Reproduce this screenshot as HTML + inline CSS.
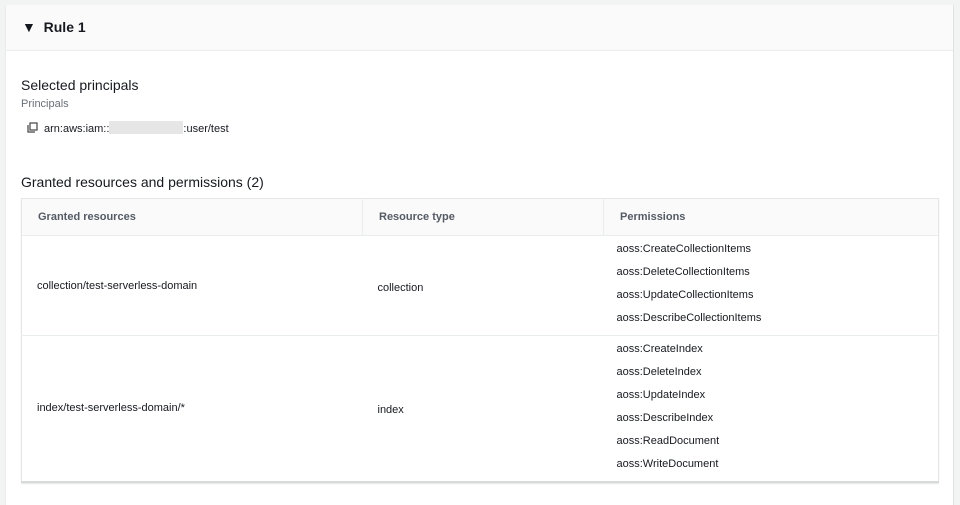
<!DOCTYPE html>
<html><head><style>
body{margin:0;width:960px;height:498px;background:#f2f3f3;font-family:"Liberation Sans",sans-serif;color:#16191f;overflow:hidden;position:relative}
.card{position:absolute;left:5px;top:5px;width:947px;height:500px;background:#fff;border-left:1px solid #e9ebed;border-right:1px solid #dfe1e3}
.hdr{height:45px;background:#fafafa;border-bottom:1px solid #eaeded;position:relative}
.hdr span{position:absolute;left:16px;top:14px;font-size:14px;font-weight:bold}
.abs{position:absolute;white-space:nowrap}
table{position:absolute;left:21px;top:198px;width:918px;border-collapse:collapse;font-size:11px;border:1px solid #e4e6e8;border-bottom:2px solid #d5dbdb;box-shadow:0 1px 1px rgba(0,0,0,.1)}
th{background:#fafafa;height:36px;text-align:left;padding:0 16px;font-weight:bold;color:#545b64;border-bottom:1px solid #eaeded;font-size:11px}
th+th{border-left:1px solid #eaeded}
td{padding:0 15px;vertical-align:middle;border-top:1px solid #eaeded}
td.p{padding-left:13px}
.p div{height:23px;line-height:23px}
</style></head><body>
<div class="card">
<div class="hdr"><span>&#9660;&nbsp; Rule 1</span></div>
</div>
<div class="abs" style="left:21px;top:77px;font-size:14px">Selected principals</div>
<div class="abs" style="left:21px;top:98px;font-size:11px;color:#687078">Principals</div>
<svg class="abs" style="left:27px;top:122px" width="11" height="11" viewBox="0 0 11 11"><rect x="3" y="1" width="7" height="7" fill="none" stroke="#444" stroke-width="1.2"/><path d="M1 3v7h7" fill="none" stroke="#444" stroke-width="1.2"/></svg>
<div class="abs" style="left:44px;top:121px;font-size:11px">arn:aws:iam::<span style="display:inline-block;width:74px;height:13px;background:#e6e6e6;vertical-align:-2px"></span>:user/test</div>
<div class="abs" style="left:21px;top:174px;font-size:14px">Granted resources and permissions (2)</div>
<table>
<tr><th style="width:308px">Granted resources</th><th style="width:208px">Resource type</th><th>Permissions</th></tr>
<tr style="height:100px"><td>collection/test-serverless-domain</td><td style="padding-top:4px">collection</td><td class="p" style="padding-bottom:4px"><div>aoss:CreateCollectionItems</div><div>aoss:DeleteCollectionItems</div><div>aoss:UpdateCollectionItems</div><div>aoss:DescribeCollectionItems</div></td></tr>
<tr style="height:146px"><td>index/test-serverless-domain/*</td><td style="padding-top:4px">index</td><td class="p" style="padding-bottom:2px"><div>aoss:CreateIndex</div><div>aoss:DeleteIndex</div><div>aoss:UpdateIndex</div><div>aoss:DescribeIndex</div><div>aoss:ReadDocument</div><div>aoss:WriteDocument</div></td></tr>
</table>
</body></html>
